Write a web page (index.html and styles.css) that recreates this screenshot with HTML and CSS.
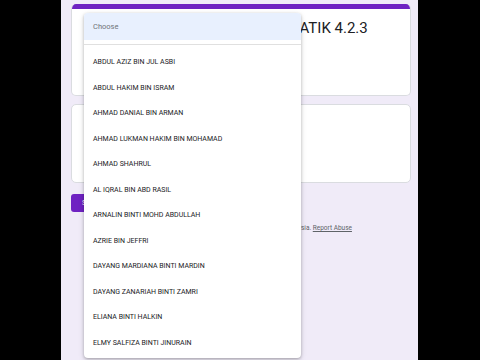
FILE: index.html
```html
<!DOCTYPE html>
<html>
<head>
<meta charset="utf-8">
<link rel="stylesheet" href="styles.css">
</head>
<body>
<div class="stage">
  <div class="form">
    <div class="card title-card">
      <div class="accent"></div>
      <div class="title">KUIZ PENGUKUHAN MATEMATIK 4.2.3</div>
    </div>
    <div class="card question-card">
      <div class="q-label">NAMA</div>
    </div>
    <div class="actions">
      <button class="submit">Submit</button>
    </div>
    <div class="footer">This form was created inside of Kementerian Pendidikan Malaysia. <span class="link">Report Abuse</span></div>
  </div>
  <div class="menu">
    <div class="choose">Choose</div>
    <div class="sep"></div>
    <div class="items">
      <div class="item">ABDUL AZIZ BIN JUL ASBI</div>
      <div class="item">ABDUL HAKIM BIN ISRAM</div>
      <div class="item">AHMAD DANIAL BIN ARMAN</div>
      <div class="item">AHMAD LUKMAN HAKIM BIN MOHAMAD</div>
      <div class="item">AHMAD SHAHRUL</div>
      <div class="item">AL IQRAL BIN ABD RASIL</div>
      <div class="item">ARNALIN BINTI MOHD ABDULLAH</div>
      <div class="item">AZRIE BIN JEFFRI</div>
      <div class="item">DAYANG MARDIANA BINTI MARDIN</div>
      <div class="item">DAYANG ZANARIAH BINTI ZAMRI</div>
      <div class="item">ELIANA BINTI HALKIN</div>
      <div class="item">ELMY SALFIZA BINTI JINURAIN</div>
    </div>
  </div>
</div>
</body>
</html>
```

FILE: styles.css
```css
html, body {
  margin: 0;
  padding: 0;
  background: #000;
}
body {
  width: 480px;
  height: 360px;
  overflow: hidden;
  font-family: Roboto, "Liberation Sans", Arial, sans-serif;
}
.stage {
  position: relative;
  width: 480px;
  height: 360px;
  display: flex;
}
.form {
  margin-left: 61px;
  width: 357px;
  height: 360px;
  box-sizing: border-box;
  padding: 4px 7px 0 10px;
  background: #f0ebf8;
  display: flex;
  flex-direction: column;
}
.card {
  background: #fff;
  border: 1px solid #dadce0;
  border-radius: 5px;
  box-sizing: border-box;
  overflow: hidden;
}
.title-card {
  height: 92px;
  border-top: none;
}
.accent {
  height: 5px;
  background: #6f22c2;
}
.title {
  padding: 10px 0 0 36px;
  font-size: 15px;
  color: #202124;
  white-space: nowrap;
}
.question-card {
  margin-top: 8px;
  height: 79px;
  padding: 13px;
}
.q-label {
  font-size: 9px;
  color: #202124;
}
.actions {
  margin-top: 7px;
  height: 18px;
}
.submit {
  width: 44px;
  height: 18px;
  border: none;
  border-radius: 3px;
  background: #6f22c2;
  color: #fff;
  font-family: inherit;
  font-size: 7px;
  padding: 0;
}
.footer {
  margin-top: 16px;
  padding-right: 11px;
  font-size: 6.5px;
  color: #5f6368;
  text-align: center;
  white-space: nowrap;
}
.link {
  text-decoration: underline;
}
.menu {
  position: absolute;
  left: 84px;
  top: 13px;
  width: 217px;
  height: 345px;
  background: #fff;
  border-radius: 4px;
  box-shadow: 0 1px 3px rgba(0,0,0,0.25), 0 2px 6px rgba(0,0,0,0.12);
  overflow: hidden;
}
.choose {
  height: 27px;
  line-height: 27px;
  background: #e8f0fe;
  padding-left: 9px;
  font-size: 7.5px;
  color: #70757a;
}
.sep {
  margin-top: 4px;
  border-top: 1px solid #e0e0e0;
}
.items {
  padding-top: 5px;
}
.item {
  height: 25.5px;
  line-height: 25.5px;
  padding-left: 9px;
  font-size: 7px;
  color: #202124;
  white-space: nowrap;
}
```
